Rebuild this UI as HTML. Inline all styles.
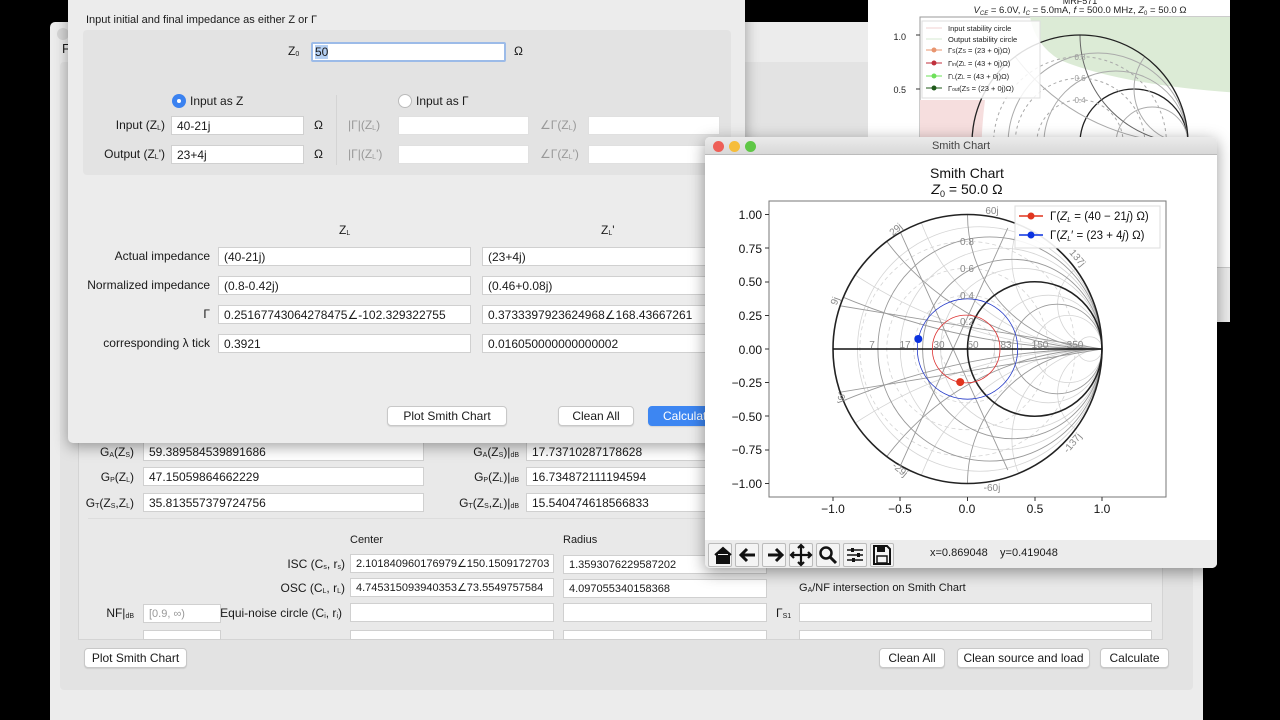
<!DOCTYPE html>
<html><head><meta charset="utf-8"><style>
*{box-sizing:border-box;margin:0;padding:0}
html{overflow:hidden;width:1280px;height:720px}
body{width:1280px;height:720px;background:#000;position:relative;overflow:hidden;font-family:"Liberation Sans",Arial,sans-serif;font-size:12px;color:#1a1a1a}
.a{position:absolute}
.in{position:absolute;background:#fff;border:1px solid #d0d0d0;height:19px;padding:2px 5px;font-size:12px;line-height:14px;white-space:nowrap;overflow:hidden}
.lb{position:absolute;text-align:right;white-space:nowrap;font-size:12px}
.btn{position:absolute;background:#fff;border:1px solid #c8c8c8;border-radius:4px;height:20px;text-align:center;line-height:18px;font-size:12px;box-shadow:0 1px 1px rgba(0,0,0,.1)}
.g{color:#999}
sub{font-size:7px;vertical-align:-1px;line-height:0}
.tb{position:absolute;top:4px;width:24px;height:24px;border:1px solid #bbb;background:#f4f4f4;border-radius:2px}
</style></head><body>

<div class="a" style="left:50px;top:22px;width:1153px;height:698px;background:#ececec;border-radius:5px 5px 0 0">
 <div class="a" style="left:7px;top:6px;width:12px;height:12px;border-radius:6px;background:#d6d6d6"></div>
 <div class="a" style="left:12px;top:19px;font-size:13px">F</div>
 <div class="a" style="left:10px;top:40px;width:1133px;height:628px;background:#e3e3e3;border-radius:4px"></div>
 <div class="a" style="left:28px;top:410px;width:1085px;height:208px;background:#e9e9e9;border:1px solid #d4d4d4"></div>
</div>
<div class="lb" style="left:90px;top:445px;width:44px">G<sub>A</sub>(Z<sub>S</sub>)</div>
<div class="in" style="left:143px;top:442px;width:281px">59.389584539891686</div>
<div class="lb" style="left:90px;top:470px;width:44px">G<sub>P</sub>(Z<sub>L</sub>)</div>
<div class="in" style="left:143px;top:467px;width:281px">47.15059864662229</div>
<div class="lb" style="left:80px;top:496px;width:54px">G<sub>T</sub>(Z<sub>S</sub>,Z<sub>L</sub>)</div>
<div class="in" style="left:143px;top:493px;width:281px">35.813557379724756</div>
<div class="lb" style="left:430px;top:445px;width:89px">G<sub>A</sub>(Z<sub>S</sub>)|<sub>dB</sub></div>
<div class="in" style="left:526px;top:442px;width:190px">17.73710287178628</div>
<div class="lb" style="left:430px;top:470px;width:89px">G<sub>P</sub>(Z<sub>L</sub>)|<sub>dB</sub></div>
<div class="in" style="left:526px;top:467px;width:190px">16.734872111194594</div>
<div class="lb" style="left:420px;top:496px;width:99px">G<sub>T</sub>(Z<sub>S</sub>,Z<sub>L</sub>)|<sub>dB</sub></div>
<div class="in" style="left:526px;top:493px;width:190px">15.540474618566833</div>
<div class="a" style="left:88px;top:518px;width:1060px;height:1px;background:#ddd"></div>
<div class="a" style="left:350px;top:534px;font-size:11px">Center</div>
<div class="a" style="left:563px;top:534px;font-size:11px">Radius</div>
<div class="lb" style="left:200px;top:557px;width:145px">ISC (C<sub>s</sub>, r<sub>s</sub>)</div>
<div class="in" style="left:350px;top:554px;width:204px;font-size:11px">2.101840960176979∠150.1509172703</div>
<div class="in" style="left:563px;top:555px;width:204px;font-size:11px">1.3593076229587202</div>
<div class="lb" style="left:200px;top:581px;width:145px">OSC (C<sub>L</sub>, r<sub>L</sub>)</div>
<div class="in" style="left:350px;top:578px;width:204px;font-size:11px">4.745315093940353∠73.5549757584</div>
<div class="in" style="left:563px;top:579px;width:204px;font-size:11px">4.097055340158368</div>
<div class="a" style="left:799px;top:582px;font-size:11px">G<sub>A</sub>/NF intersection on Smith Chart</div>
<div class="lb" style="left:100px;top:606px;width:34px">NF|<sub>dB</sub></div>
<div class="in g" style="left:143px;top:604px;width:78px;font-size:11px">[0.9, ∞)</div>
<div class="lb" style="left:220px;top:606px;width:122px">Equi-noise circle (C<sub>i</sub>, r<sub>i</sub>)</div>
<div class="in" style="left:350px;top:603px;width:204px"></div>
<div class="in" style="left:563px;top:603px;width:204px"></div>
<div class="a" style="left:776px;top:606px">Γ<sub>S1</sub></div>
<div class="in" style="left:799px;top:603px;width:353px"></div>
<div class="in" style="left:143px;top:630px;width:78px;height:10px;padding:0"></div>
<div class="in" style="left:350px;top:630px;width:204px;height:10px;padding:0"></div>
<div class="in" style="left:563px;top:630px;width:204px;height:10px;padding:0"></div>
<div class="in" style="left:799px;top:630px;width:353px;height:10px;padding:0"></div>
<div class="btn" style="left:84px;top:648px;width:103px">Plot Smith Chart</div>
<div class="btn" style="left:879px;top:648px;width:66px">Clean All</div>
<div class="btn" style="left:957px;top:648px;width:133px">Clean source and load</div>
<div class="btn" style="left:1100px;top:648px;width:69px">Calculate</div>

<div class="a" style="left:868px;top:0;width:362px;height:322px;background:#fff;overflow:hidden">
 <div class="a" style="left:0;top:267px;width:362px;height:55px;background:#ececec;border-top:1px solid #ccc"></div>
 <svg class="a" style="left:0;top:0" width="362" height="267">
  <g transform="translate(-868,0)">
   <rect x="920" y="17" width="320" height="270" fill="none" stroke="#999"/>
   <path d="M1030,17 L1240,17 L1240,93 Q1120,85 1060,60 Q1035,45 1030,17Z" fill="#dcebd6"/>
   <path d="M920,100 L985,100 Q975,180 990,267 L920,267Z" fill="#f6dede"/>
   <g transform="translate(1080,143) scale(108,-108)" fill="none">
    <defs><clipPath id="c2"><circle r="1"/></clipPath></defs>
    <g clip-path="url(#c2)" stroke="#aaa">
     <circle cx="0.5" cy="0" r="0.5" stroke="#222" stroke-width="1.3" vector-effect="non-scaling-stroke"/>
     <circle cx="0.333" r="0.667" vector-effect="non-scaling-stroke"/>
     <circle cx="0.667" r="0.333" vector-effect="non-scaling-stroke"/>
     <circle cx="0.167" r="0.833" vector-effect="non-scaling-stroke"/>
     <circle cx="1" cy="1" r="1" stroke="#666" vector-effect="non-scaling-stroke"/>
     <circle cx="1" cy="2" r="2" vector-effect="non-scaling-stroke"/>
     <circle cx="1" cy="0.5" r="0.5" vector-effect="non-scaling-stroke"/>
     <circle cx="0" cy="0" r="0.4" stroke-dasharray="3 3" vector-effect="non-scaling-stroke"/>
     <circle cx="0" cy="0" r="0.6" stroke-dasharray="3 3" vector-effect="non-scaling-stroke"/>
     <circle cx="0" cy="0" r="0.8" stroke-dasharray="3 3" vector-effect="non-scaling-stroke"/>
    </g>
    <circle r="1" stroke="#222" stroke-width="1.3" vector-effect="non-scaling-stroke"/>
   </g>
   <line x1="916" y1="35" x2="920" y2="35" stroke="#333"/><line x1="916" y1="89" x2="920" y2="89" stroke="#333"/>
  </g>
  <text x="38" y="40" font-size="9" text-anchor="end" fill="#222">1.0</text>
  <text x="38" y="93" font-size="9" text-anchor="end" fill="#222">0.5</text>
  <text x="212" y="4" font-size="9" text-anchor="middle" fill="#222">MRF571</text>
  <text x="212" y="13" font-size="9.5" text-anchor="middle" fill="#222"><tspan font-style="italic">V<tspan font-size="6" dy="2">CE</tspan></tspan><tspan dy="-2"> = 6.0V, </tspan><tspan font-style="italic">I<tspan font-size="6" dy="2">C</tspan></tspan><tspan dy="-2"> = 5.0mA, </tspan><tspan font-style="italic">f</tspan> = 500.0 MHz, <tspan font-style="italic">Z</tspan><tspan font-size="6" dy="2">0</tspan><tspan dy="-2"> = 50.0 Ω</tspan></text>
  <text x="212" y="60" font-size="8" fill="#999" text-anchor="middle">0.8</text>
  <text x="212" y="81" font-size="8" fill="#999" text-anchor="middle">0.6</text>
  <text x="212" y="103" font-size="8" fill="#999" text-anchor="middle">0.4</text>
  <rect x="54" y="21" width="118" height="77" fill="#fff" fill-opacity="0.85" stroke="#ddd"/>
  <g font-size="7.5" fill="#222">
   <line x1="58" y1="28" x2="74" y2="28" stroke="#f2d0d0"/><text x="80" y="31">Input stability circle</text>
   <line x1="58" y1="39" x2="74" y2="39" stroke="#d6e8d0"/><text x="80" y="42">Output stability circle</text>
   <line x1="58" y1="50" x2="74" y2="50" stroke="#e8956f"/><circle cx="66" cy="50" r="2.5" fill="#e8956f"/><text x="80" y="53">Γ<tspan font-size="5">S</tspan>(Z<tspan font-size="5">S</tspan> = (23 + 0j)Ω)</text>
   <line x1="58" y1="63" x2="74" y2="63" stroke="#c0303c"/><circle cx="66" cy="63" r="2.5" fill="#c0303c"/><text x="80" y="66">Γ<tspan font-size="5">in</tspan>(Z<tspan font-size="5">L</tspan> = (43 + 0j)Ω)</text>
   <line x1="58" y1="76" x2="74" y2="76" stroke="#6ee05a"/><circle cx="66" cy="76" r="2.5" fill="#6ee05a"/><text x="80" y="79">Γ<tspan font-size="5">L</tspan>(Z<tspan font-size="5">L</tspan> = (43 + 0j)Ω)</text>
   <line x1="58" y1="88" x2="74" y2="88" stroke="#1f5a1a"/><circle cx="66" cy="88" r="2.5" fill="#1f5a1a"/><text x="80" y="91">Γ<tspan font-size="5">out</tspan>(Z<tspan font-size="5">S</tspan> = (23 + 0j)Ω)</text>
  </g>
 </svg>
</div>

<div class="a" style="left:68px;top:0;width:677px;height:443px;background:#ececec;border-radius:0 0 5px 5px;box-shadow:0 4px 14px rgba(0,0,0,.35)">
 <div class="a" style="left:18px;top:14px;font-size:11px">Input initial and final impedance as either Z or Γ</div>
 <div class="a" style="left:15px;top:30px;width:648px;height:145px;background:#e3e3e3;border-radius:4px"></div>
</div>
<div class="a" style="left:288px;top:44px;font-size:12px">Z<sub>0</sub></div>
<div class="in" style="left:311px;top:42px;width:195px;height:20px;border:2px solid #9cbbe8;border-radius:2px;padding:1px 2px"><span style="background:#b4cff2">50</span></div>
<div class="a" style="left:514px;top:44px">Ω</div>
<div class="a" style="left:172px;top:94px;width:14px;height:14px;border-radius:7px;background:#3b82f0"><div class="a" style="left:5px;top:5px;width:4px;height:4px;border-radius:2px;background:#fff"></div></div>
<div class="a" style="left:190px;top:94px">Input as Z</div>
<div class="a" style="left:398px;top:94px;width:14px;height:14px;border-radius:7px;background:#fff;border:1px solid #bbb"></div>
<div class="a" style="left:416px;top:94px">Input as Γ</div>
<div class="a" style="left:336px;top:95px;width:1px;height:70px;background:#d4d4d4"></div>
<div class="lb" style="left:90px;top:118px;width:75px">Input (Z<sub>L</sub>)</div>
<div class="in" style="left:171px;top:116px;width:133px">40-21j</div>
<div class="a" style="left:314px;top:118px">Ω</div>
<div class="lb" style="left:90px;top:147px;width:75px">Output (Z<sub>L</sub>')</div>
<div class="in" style="left:171px;top:145px;width:133px">23+4j</div>
<div class="a" style="left:314px;top:147px">Ω</div>
<div class="a g" style="left:348px;top:118px">|Γ|(Z<sub>L</sub>)</div>
<div class="in" style="left:398px;top:116px;width:131px;border-color:#e0e0e0"></div>
<div class="a g" style="left:540px;top:118px">∠Γ(Z<sub>L</sub>)</div>
<div class="in" style="left:588px;top:116px;width:132px;border-color:#e0e0e0"></div>
<div class="a g" style="left:348px;top:147px">|Γ|(Z<sub>L</sub>')</div>
<div class="in" style="left:398px;top:145px;width:131px;border-color:#e0e0e0"></div>
<div class="a g" style="left:540px;top:147px">∠Γ(Z<sub>L</sub>')</div>
<div class="in" style="left:588px;top:145px;width:132px;border-color:#e0e0e0"></div>

<div class="a" style="left:339px;top:223px">Z<sub>L</sub></div>
<div class="a" style="left:601px;top:223px">Z<sub>L</sub>'</div>
<div class="lb" style="left:70px;top:249px;width:140px">Actual impedance</div>
<div class="in" style="left:218px;top:247px;width:253px">(40-21j)</div>
<div class="in" style="left:482px;top:247px;width:240px">(23+4j)</div>
<div class="lb" style="left:70px;top:278px;width:140px">Normalized impedance</div>
<div class="in" style="left:218px;top:276px;width:253px">(0.8-0.42j)</div>
<div class="in" style="left:482px;top:276px;width:240px">(0.46+0.08j)</div>
<div class="lb" style="left:70px;top:307px;width:140px">Γ</div>
<div class="in" style="left:218px;top:305px;width:253px">0.25167743064278475∠-102.329322755</div>
<div class="in" style="left:482px;top:305px;width:240px">0.3733397923624968∠168.43667261</div>
<div class="lb" style="left:70px;top:336px;width:140px">corresponding λ tick</div>
<div class="in" style="left:218px;top:334px;width:253px">0.3921</div>
<div class="in" style="left:482px;top:334px;width:240px">0.016050000000000002</div>
<div class="btn" style="left:387px;top:406px;width:120px">Plot Smith Chart</div>
<div class="btn" style="left:558px;top:406px;width:76px">Clean All</div>
<div class="btn" style="left:648px;top:406px;width:80px;background:#3d86f2;color:#fff;border-color:#3d86f2;text-align:left;padding-left:14px">Calculate</div>

<div class="a" style="left:705px;top:137px;width:512px;height:431px;background:#fff;border-radius:5px;box-shadow:0 4px 16px rgba(0,0,0,.4);overflow:hidden">
 <div class="a" style="left:0;top:0;width:512px;height:18px;background:linear-gradient(#ebebeb,#d8d8d8);border-bottom:1px solid #bbb;text-align:center;font-size:11px;line-height:18px;color:#444">Smith Chart</div>
 <div class="a" style="left:8px;top:4px;width:11px;height:11px;border-radius:6px;background:#ee5f57"></div>
 <div class="a" style="left:24px;top:4px;width:11px;height:11px;border-radius:6px;background:#f6bd3a"></div>
 <div class="a" style="left:40px;top:4px;width:11px;height:11px;border-radius:6px;background:#5fc746"></div>
 <div class="a" style="left:0;top:403px;width:512px;height:28px;background:#ececec"></div>
 <div class="tb" style="left:3px;top:406px"></div><div class="tb" style="left:30px;top:406px"></div><div class="tb" style="left:57px;top:406px"></div><div class="tb" style="left:84px;top:406px"></div><div class="tb" style="left:111px;top:406px"></div><div class="tb" style="left:138px;top:406px"></div><div class="tb" style="left:165px;top:406px"></div>
 <svg class="a" style="left:0;top:403px" width="200" height="28">
  <path d="M10,15 L18,8 L26,15 M12,14 V23 H17 V18 H19 V23 H24 V14" fill="#111" stroke="#111" stroke-width="2"/>
  <path d="M50,15 H36 M42,9 L36,15 L42,21" fill="none" stroke="#111" stroke-width="3"/>
  <path d="M63,15 H77 M71,9 L77,15 L71,21" fill="none" stroke="#111" stroke-width="3"/>
  <path d="M96,5 V25 M86,15 H106 M93,8 L96,5 L99,8 M93,22 L96,25 L99,22 M89,12 L86,15 L89,18 M103,12 L106,15 L103,18" fill="none" stroke="#111" stroke-width="2.2"/>
  <circle cx="121" cy="13" r="5.5" fill="none" stroke="#111" stroke-width="2.5"/><path d="M125,17 L131,23" stroke="#111" stroke-width="3"/>
  <path d="M142,10 H158 M142,15 H158 M142,20 H158" stroke="#111" stroke-width="1.6"/><rect x="146" y="8" width="3" height="4" fill="#111"/><rect x="152" y="13" width="3" height="4" fill="#111"/><rect x="147" y="18" width="3" height="4" fill="#111"/>
  <path d="M169,6 H182 L185,9 V24 H169Z" fill="none" stroke="#111" stroke-width="2"/><rect x="172" y="7" width="8" height="5" fill="#111"/><rect x="172" y="16" width="10" height="7" fill="none" stroke="#111" stroke-width="1.5"/>
 </svg>
 <div class="a" style="left:225px;top:410px;font-size:11px">x=0.869048&nbsp;&nbsp;&nbsp;&nbsp;y=0.419048</div>
</div>
<svg class="a" style="left:0;top:0;pointer-events:none" width="1280" height="720">
 <text x="967" y="178" font-size="14" text-anchor="middle" fill="#111">Smith Chart</text>
 <text x="967" y="194" font-size="14" text-anchor="middle" fill="#111"><tspan font-style="italic">Z</tspan><tspan font-size="9" dy="3">0</tspan><tspan dy="-3"> = 50.0 Ω</tspan></text>
 <rect x="769" y="201" width="397" height="296" fill="none" stroke="#777"/>
 <g transform="translate(967.5,349) scale(134.5,-134.5)" fill="none">
  <defs><clipPath id="c1"><circle r="1"/></clipPath></defs>
  <g clip-path="url(#c1)">
   <g stroke="#d4d4d4" stroke-width="0.8">
    <circle cx="0.0909" r="0.909" vector-effect="non-scaling-stroke"/>
    <circle cx="0.25" r="0.75" vector-effect="non-scaling-stroke"/>
    <circle cx="0.4" r="0.6" vector-effect="non-scaling-stroke"/>
    <circle cx="0.6" r="0.4" vector-effect="non-scaling-stroke"/>
    <circle cx="0.75" r="0.25" vector-effect="non-scaling-stroke"/>
    <circle cx="0.909" r="0.0909" vector-effect="non-scaling-stroke"/>
    <circle cx="1" cy="3.33" r="3.33" vector-effect="non-scaling-stroke"/><circle cx="1" cy="-3.33" r="3.33" vector-effect="non-scaling-stroke"/>
    <circle cx="1" cy="1.43" r="1.43" vector-effect="non-scaling-stroke"/><circle cx="1" cy="-1.43" r="1.43" vector-effect="non-scaling-stroke"/>
    <circle cx="1" cy="0.67" r="0.67" vector-effect="non-scaling-stroke"/><circle cx="1" cy="-0.67" r="0.67" vector-effect="non-scaling-stroke"/>
    <circle cx="1" cy="0.33" r="0.33" vector-effect="non-scaling-stroke"/><circle cx="1" cy="-0.33" r="0.33" vector-effect="non-scaling-stroke"/>
    <circle r="0.2" stroke-dasharray="4 3" vector-effect="non-scaling-stroke"/><circle r="0.4" stroke-dasharray="4 3" vector-effect="non-scaling-stroke"/>
    <circle r="0.6" stroke-dasharray="4 3" vector-effect="non-scaling-stroke"/><circle r="0.8" stroke-dasharray="4 3" vector-effect="non-scaling-stroke"/>
   </g>
   <g stroke="#999" stroke-width="0.9">
    <circle cx="0.1667" r="0.833" vector-effect="non-scaling-stroke"/>
    <circle cx="0.333" r="0.667" vector-effect="non-scaling-stroke"/>
    <circle cx="0.667" r="0.333" vector-effect="non-scaling-stroke"/>
    <circle cx="1" cy="5" r="5" vector-effect="non-scaling-stroke"/><circle cx="1" cy="-5" r="5" vector-effect="non-scaling-stroke"/>
    <circle cx="1" cy="2" r="2" vector-effect="non-scaling-stroke"/><circle cx="1" cy="-2" r="2" vector-effect="non-scaling-stroke"/>
    <circle cx="1" cy="1" r="1" vector-effect="non-scaling-stroke"/><circle cx="1" cy="-1" r="1" vector-effect="non-scaling-stroke"/>
    <line x1="-1" y1="0.33" x2="1" y2="0" vector-effect="non-scaling-stroke"/>
    <line x1="-1" y1="-0.33" x2="1" y2="0" vector-effect="non-scaling-stroke"/>
    <line x1="-0.5" y1="0.87" x2="0.3" y2="-0.9" vector-effect="non-scaling-stroke"/>
    <line x1="-0.5" y1="-0.87" x2="0.3" y2="0.9" vector-effect="non-scaling-stroke"/>
   </g>
  </g>
  <circle r="1" stroke="#222" stroke-width="1.6" vector-effect="non-scaling-stroke"/>
  <circle cx="0.5" r="0.5" stroke="#222" stroke-width="1.6" vector-effect="non-scaling-stroke"/>
  <line x1="-1" y1="0" x2="1" y2="0" stroke="#111" stroke-width="1.6" vector-effect="non-scaling-stroke"/>
  <circle cx="-0.01" r="0.2517" stroke="#d33" stroke-width="0.8" vector-effect="non-scaling-stroke"/>
  <circle cx="0" r="0.3733" stroke="#2338c8" stroke-width="0.8" vector-effect="non-scaling-stroke"/>
 </g>
 <circle cx="960.2" cy="382.1" r="4" fill="#e0351f"/>
 <circle cx="918.3" cy="339" r="4" fill="#0a32e0"/>
 <g font-size="10" fill="#888" text-anchor="middle">
  <text x="967" y="245">0.8</text><text x="967" y="272">0.6</text><text x="967" y="299">0.4</text><text x="967" y="325">0.2</text>
  <text x="872" y="348">7</text><text x="905" y="348">17</text><text x="939" y="348">30</text><text x="973" y="348">50</text><text x="1006" y="348">83</text><text x="1040" y="348">150</text><text x="1075" y="348">350</text>
  <text x="992" y="214">60j</text><text x="992" y="491">-60j</text>
  <text x="898" y="232" transform="rotate(-40 898 232)">29j</text><text x="898" y="472" transform="rotate(40 898 472)">-29j</text>
  <text x="1075" y="260" transform="rotate(50 1075 260)">137j</text><text x="1075" y="445" transform="rotate(-50 1075 445)">-137j</text>
  <text x="838" y="302" transform="rotate(-70 838 302)">9j</text><text x="838" y="398" transform="rotate(70 838 398)">-9j</text>
 </g>
 <g font-size="12" fill="#111" text-anchor="end">
  <text x="762" y="219">1.00</text><text x="762" y="253">0.75</text><text x="762" y="286">0.50</text><text x="762" y="320">0.25</text><text x="762" y="354">0.00</text>
  <text x="762" y="387">−0.25</text><text x="762" y="421">−0.50</text><text x="762" y="454">−0.75</text><text x="762" y="488">−1.00</text>
 </g>
 <g stroke="#333"><line x1="765" y1="214.5" x2="769" y2="214.5"/><line x1="765" y1="248" x2="769" y2="248"/><line x1="765" y1="282" x2="769" y2="282"/><line x1="765" y1="315.5" x2="769" y2="315.5"/><line x1="765" y1="349" x2="769" y2="349"/><line x1="765" y1="382.5" x2="769" y2="382.5"/><line x1="765" y1="416" x2="769" y2="416"/><line x1="765" y1="450" x2="769" y2="450"/><line x1="765" y1="483.5" x2="769" y2="483.5"/>
 <line x1="833" y1="497" x2="833" y2="501"/><line x1="900" y1="497" x2="900" y2="501"/><line x1="967.5" y1="497" x2="967.5" y2="501"/><line x1="1035" y1="497" x2="1035" y2="501"/><line x1="1102" y1="497" x2="1102" y2="501"/></g>
 <g font-size="12" fill="#111" text-anchor="middle">
  <text x="833" y="513">−1.0</text><text x="900" y="513">−0.5</text><text x="967" y="513">0.0</text><text x="1035" y="513">0.5</text><text x="1102" y="513">1.0</text>
 </g>
 <rect x="1015" y="206" width="145" height="42" fill="#fff" fill-opacity="0.9" stroke="#ddd"/>
 <line x1="1019" y1="216" x2="1043" y2="216" stroke="#e0351f" stroke-width="1.5"/><circle cx="1031" cy="216" r="3.5" fill="#e0351f"/>
 <line x1="1019" y1="235" x2="1043" y2="235" stroke="#0a32e0" stroke-width="1.5"/><circle cx="1031" cy="235" r="3.5" fill="#0a32e0"/>
 <text x="1050" y="220" font-size="11.5" fill="#111">Γ(<tspan font-style="italic">Z</tspan><tspan font-size="7" dy="2" font-style="italic">L</tspan><tspan dy="-2"> = (40 − 21</tspan><tspan font-style="italic">j</tspan>) Ω)</text>
 <text x="1050" y="239" font-size="11.5" fill="#111">Γ(<tspan font-style="italic">Z</tspan><tspan font-size="7" dy="2" font-style="italic">L</tspan><tspan dy="-2">′ = (23 + 4</tspan><tspan font-style="italic">j</tspan>) Ω)</text>
</svg>
</body></html>
